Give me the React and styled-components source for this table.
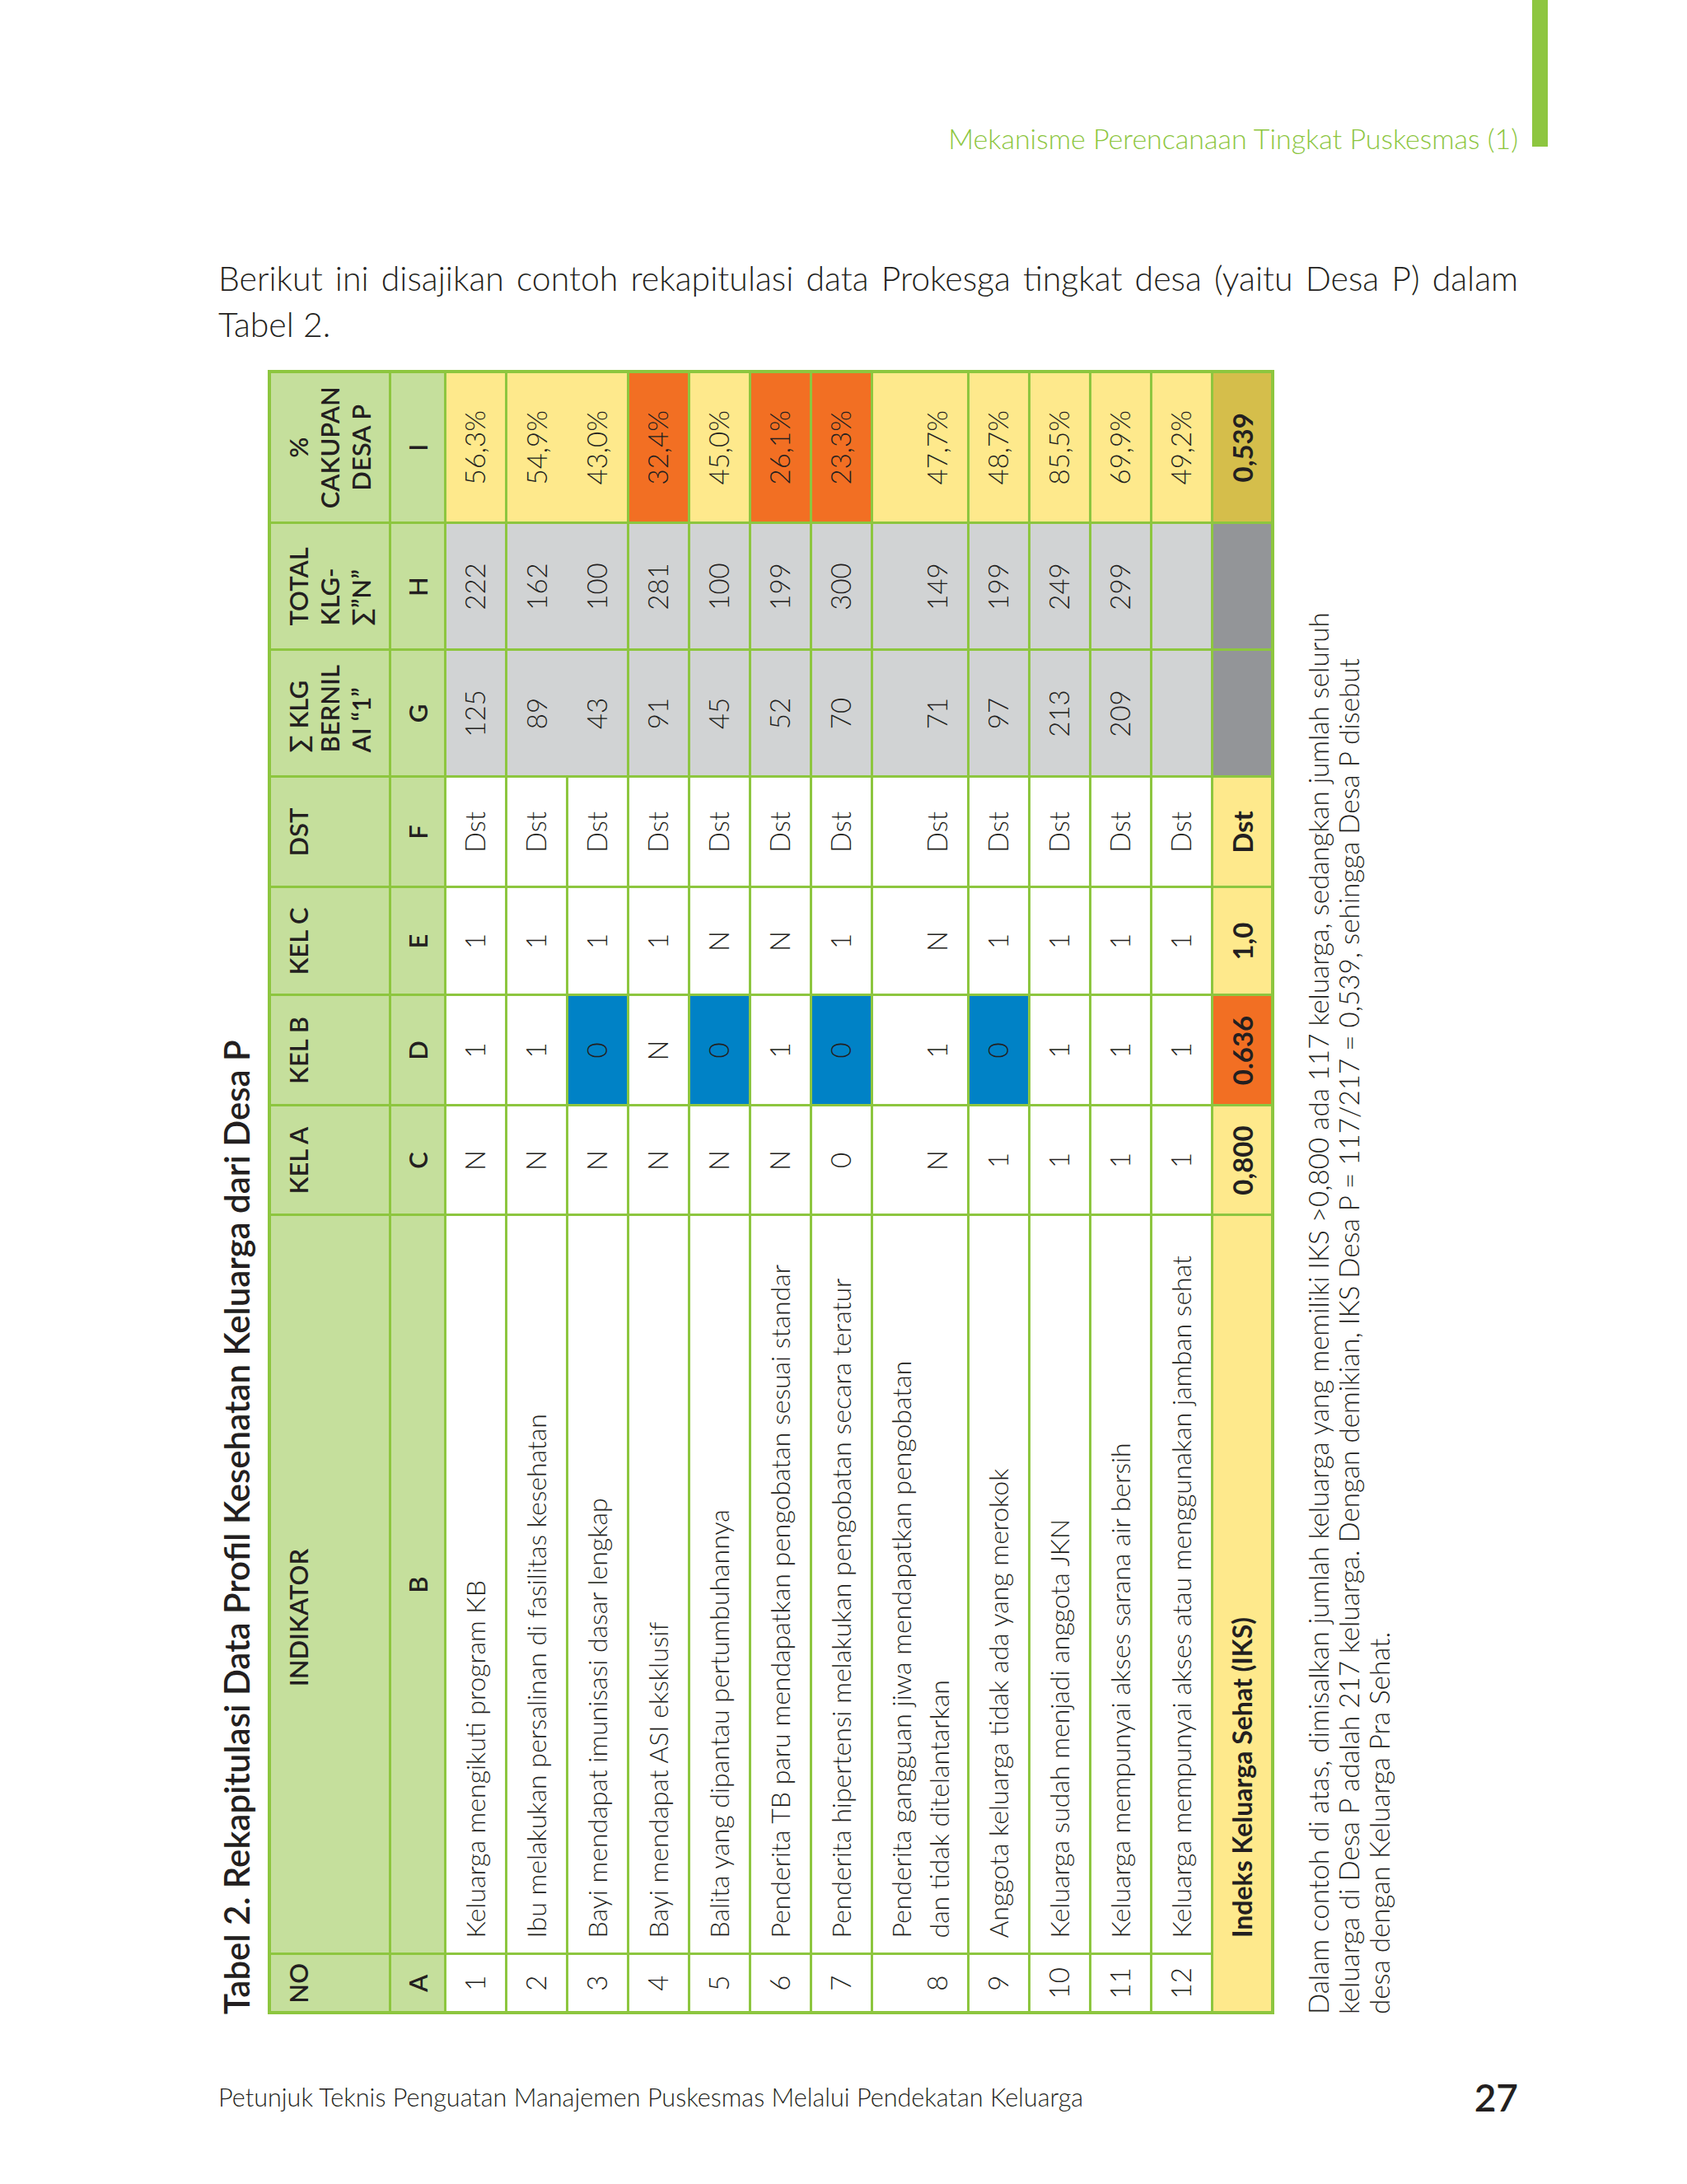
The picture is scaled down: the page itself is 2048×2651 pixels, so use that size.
import React from 'react';
import styled, { createGlobalStyle } from 'styled-components';

const GREEN = '#8dc63f';
const HEAD = '#c5df9c';
const GRAY = '#d1d3d4';
const DARK = '#939598';
const YELLOW = '#fee98c';
const ORANGE = '#f26f23';
const BLUE = '#0082c6';
const GOLD = '#d5be4b';

const GlobalStyle = createGlobalStyle`
  body {
    margin: 0;
    background: #fff;
    color: #231f20;
    font-family: Lato, 'Liberation Sans', sans-serif;
  }
`;

const Page = styled.div`
  width: 2048px;
  height: 2651px;
  display: flex;
  flex-direction: column;
  background: #fff;
  overflow: hidden;
`;

const RunningHead = styled.header`
  display: flex;
  justify-content: flex-end;
  align-items: flex-end;
  gap: 17px;
  height: 178px;
  padding-right: 169px;
`;

const HeadTitle = styled.span`
  font-size: 34px;
  font-weight: 300;
  line-height: 1;
  color: ${GREEN};
  margin-bottom: -7px;
`;

const AccentBar = styled.div`
  width: 19px;
  height: 178px;
  background: ${GREEN};
`;

const Intro = styled.p`
  margin: 132px 0 0 265px;
  width: 1578px;
  font-size: 41px;
  font-weight: 300;
  line-height: 56px;
  text-align: justify;
`;

/* the table page is printed sideways: lay it out upright, then turn it */
const RotatedFrame = styled.div`
  margin: 31px 0 0 262px;
  width: 1430px;
  height: 1992px;
`;

const RotatedContent = styled.div`
  width: 1992px;
  height: 1430px;
  transform-origin: top left;
  transform: translateY(1992px) rotate(-90deg);
`;

const Caption = styled.div`
  font-size: 42px;
  font-weight: 600;
  line-height: 50px;
  margin-bottom: 13px;
  white-space: nowrap;
`;

const Table = styled.table`
  width: 1992px;
  table-layout: fixed;
  border-collapse: collapse;
  border: 4px solid ${GREEN};
`;

const Row = styled.tr`
  height: ${p => p.$h}px;
`;

const HeadCell = styled.th`
  background: ${HEAD};
  border: 3px solid ${GREEN};
  font-size: 31px;
  font-weight: 600;
  line-height: 38px;
  vertical-align: top;
  text-align: ${p => p.$align || 'center'};
  padding: 14px ${p => p.$shift || 0}px 0 ${p => (p.$align === 'left' ? 28 : 0)}px;
  white-space: nowrap;
`;

const LetterCell = styled.th`
  background: ${HEAD};
  border: 3px solid ${GREEN};
  font-size: 31px;
  font-weight: 600;
  text-align: center;
  vertical-align: middle;
  padding: 0;
`;

const Cell = styled.td`
  background: ${p => p.$bg || '#fff'};
  border: 3px solid ${GREEN};
  ${p => p.$joinTop && 'border-top-style: hidden;'}
  font-size: 33px;
  font-weight: 300;
  line-height: 46px;
  text-align: center;
  vertical-align: bottom;
  padding: 0 0 14px;
  white-space: nowrap;
`;

const IndicatorCell = styled(Cell)`
  font-size: 32px;
  text-align: left;
  vertical-align: middle;
  padding: 0 0 0 18px;
`;

const TotalCell = styled.td`
  background: ${p => p.$bg};
  border: 3px solid ${GREEN};
  font-size: ${p => (p.$label ? '32px' : '33px')};
  font-weight: 700;
  text-align: ${p => (p.$label ? 'left' : 'center')};
  padding: 0 0 0 ${p => (p.$label ? '89px' : '0')};
  vertical-align: middle;
  white-space: nowrap;
`;

const Notes = styled.p`
  margin: 35px 0 0;
  width: 1850px;
  font-size: 33.2px;
  font-weight: 300;
  line-height: 37px;
`;

const Footer = styled.footer`
  display: flex;
  justify-content: space-between;
  align-items: center;
  margin-top: 70px;
  height: 60px;
  padding: 0 205px 0 265px;
`;

const FooterText = styled.span`
  font-size: 30.6px;
  font-weight: 300;
`;

const PageNo = styled.span`
  font-size: 46px;
  font-weight: 600;
`;

const widths = [71, 897, 133, 134, 131, 134, 154, 154, 184];

const rows = [
  { no: 1, ind: 'Keluarga mengikuti program KB', c: 'N', d: '1', e: '1', g: '125', h: '222', i: '56,3%' },
  { no: 2, ind: 'Ibu melakukan persalinan di fasilitas kesehatan', c: 'N', d: '1', e: '1', g: '89', h: '162', i: '54,9%' },
  { no: 3, ind: 'Bayi mendapat imunisasi dasar lengkap', c: 'N', d: '0', e: '1', g: '43', h: '100', i: '43,0%', join: true },
  { no: 4, ind: 'Bayi mendapat ASI eksklusif', c: 'N', d: 'N', e: '1', g: '91', h: '281', i: '32,4%', low: true },
  { no: 5, ind: 'Balita yang dipantau pertumbuhannya', c: 'N', d: '0', e: 'N', g: '45', h: '100', i: '45,0%' },
  { no: 6, ind: 'Penderita TB paru mendapatkan pengobatan sesuai standar', c: 'N', d: '1', e: 'N', g: '52', h: '199', i: '26,1%', low: true },
  { no: 7, ind: 'Penderita hipertensi melakukan pengobatan secara teratur', c: '0', d: '0', e: '1', g: '70', h: '300', i: '23,3%', low: true },
  { no: 8, ind: ['Penderita gangguan jiwa mendapatkan pengobatan', 'dan tidak ditelantarkan'], c: 'N', d: '1', e: 'N', g: '71', h: '149', i: '47,7%', h2: true },
  { no: 9, ind: 'Anggota keluarga tidak ada yang merokok', c: '1', d: '0', e: '1', g: '97', h: '199', i: '48,7%' },
  { no: 10, ind: 'Keluarga sudah menjadi anggota JKN', c: '1', d: '1', e: '1', g: '213', h: '249', i: '85,5%' },
  { no: 11, ind: 'Keluarga mempunyai akses sarana air bersih', c: '1', d: '1', e: '1', g: '209', h: '299', i: '69,9%' },
  { no: 12, ind: 'Keluarga mempunyai akses atau menggunakan jamban sehat', c: '1', d: '1', e: '1', g: '', h: '', i: '49,2%' },
];

const Indicator = ({ text }) =>
  Array.isArray(text) ? (
    <>
      {text[0]}
      <br />
      {text[1]}
    </>
  ) : (
    text
  );

const RecapTable = () => (
  <Table>
    <colgroup>
      {widths.map((w, i) => (
        <col key={i} style={{ width: w }} />
      ))}
    </colgroup>
    <thead>
      <Row $h={146}>
        <HeadCell>NO</HeadCell>
        <HeadCell $shift={80}>INDIKATOR</HeadCell>
        <HeadCell>KEL A</HeadCell>
        <HeadCell>KEL B</HeadCell>
        <HeadCell>KEL C</HeadCell>
        <HeadCell>DST</HeadCell>
        <HeadCell $align="left">
          ∑ KLG
          <br />
          BERNIL
          <br />
          AI “1”
        </HeadCell>
        <HeadCell $align="left">
          TOTAL
          <br />
          KLG-
          <br />
          ∑”N”
        </HeadCell>
        <HeadCell>
          %
          <br />
          CAKUPAN
          <br />
          DESA P
        </HeadCell>
      </Row>
      <Row $h={67}>
        {['A', 'B', 'C', 'D', 'E', 'F', 'G', 'H', 'I'].map(l => (
          <LetterCell key={l}>{l}</LetterCell>
        ))}
      </Row>
    </thead>
    <tbody>
      {rows.map(r => (
        <Row key={r.no} $h={r.h2 ? 117 : 74}>
          <Cell>{r.no}</Cell>
          <IndicatorCell>
            <Indicator text={r.ind} />
          </IndicatorCell>
          <Cell>{r.c}</Cell>
          <Cell $bg={r.d === '0' ? BLUE : undefined}>{r.d}</Cell>
          <Cell>{r.e}</Cell>
          <Cell>Dst</Cell>
          <Cell $bg={GRAY} $joinTop={r.join}>{r.g}</Cell>
          <Cell $bg={GRAY} $joinTop={r.join}>{r.h}</Cell>
          <Cell $bg={r.low ? ORANGE : YELLOW} $joinTop={r.join}>{r.i}</Cell>
        </Row>
      ))}
      <Row $h={74}>
        <TotalCell colSpan={2} $bg={YELLOW} $label>
          Indeks Keluarga Sehat (IKS)
        </TotalCell>
        <TotalCell $bg={YELLOW}>0,800</TotalCell>
        <TotalCell $bg={ORANGE}>0.636</TotalCell>
        <TotalCell $bg={YELLOW}>1,0</TotalCell>
        <TotalCell $bg={YELLOW}>Dst</TotalCell>
        <TotalCell $bg={DARK} />
        <TotalCell $bg={DARK} />
        <TotalCell $bg={GOLD}>0,539</TotalCell>
      </Row>
    </tbody>
  </Table>
);

const App = () => (
  <Page>
    <GlobalStyle />
    <RunningHead>
      <HeadTitle>Mekanisme Perencanaan Tingkat Puskesmas (1)</HeadTitle>
      <AccentBar />
    </RunningHead>

    <Intro>
      Berikut ini disajikan contoh rekapitulasi data Prokesga tingkat desa (yaitu Desa P) dalam Tabel 2.
    </Intro>

    <RotatedFrame>
      <RotatedContent>
        <Caption>Tabel 2. Rekapitulasi Data Profil Kesehatan Keluarga dari Desa P</Caption>
        <RecapTable />
        <Notes>
          Dalam contoh di atas, dimisalkan jumlah keluarga yang memiliki IKS &gt;0,800 ada 117 keluarga, sedangkan jumlah seluruh
          <br />
          keluarga di Desa P adalah 217 keluarga. Dengan demikian, IKS Desa P = 117/217 = 0,539, sehingga Desa P disebut
          <br />
          desa dengan Keluarga Pra Sehat.
        </Notes>
      </RotatedContent>
    </RotatedFrame>

    <Footer>
      <FooterText>Petunjuk Teknis Penguatan Manajemen Puskesmas Melalui Pendekatan Keluarga</FooterText>
      <PageNo>27</PageNo>
    </Footer>
  </Page>
);

export default App;
